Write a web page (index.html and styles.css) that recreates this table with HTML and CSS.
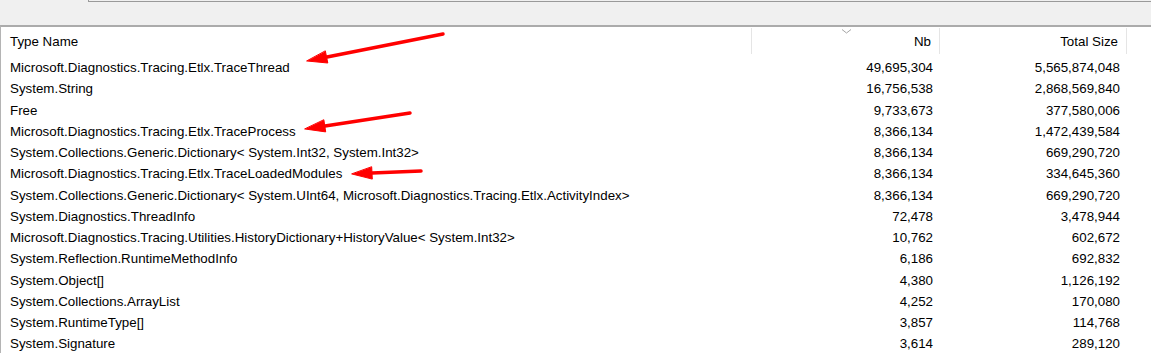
FILE: index.html
```html
<!DOCTYPE html>
<html>
<head>
<meta charset="utf-8">
<link rel="stylesheet" href="styles.css">
</head>
<body>
<div class="page">
  <div class="toolbar"><div class="textbox"></div></div>
  <div class="list">
    <div class="header">
      <div class="hcell first">Type Name</div>
      <div class="hcell num sorted">Nb<svg class="chev" width="11" height="5" viewBox="0 0 11 5"><polyline points="1,0.5 5.5,4 10,0.5" fill="none" stroke="#a6a6a6" stroke-width="1"/></svg></div>
      <div class="hcell num">Total Size</div>
      <div class="hcell rest"></div>
    </div>
    <div class="rows">
      <div class="row"><div class="cell first">Microsoft.Diagnostics.Tracing.Etlx.TraceThread</div><div class="cell num">49,695,304</div><div class="cell num">5,565,874,048</div><div class="cell"></div></div>
      <div class="row"><div class="cell first">System.String</div><div class="cell num">16,756,538</div><div class="cell num">2,868,569,840</div><div class="cell"></div></div>
      <div class="row"><div class="cell first">Free</div><div class="cell num">9,733,673</div><div class="cell num">377,580,006</div><div class="cell"></div></div>
      <div class="row"><div class="cell first">Microsoft.Diagnostics.Tracing.Etlx.TraceProcess</div><div class="cell num">8,366,134</div><div class="cell num">1,472,439,584</div><div class="cell"></div></div>
      <div class="row"><div class="cell first">System.Collections.Generic.Dictionary&lt; System.Int32, System.Int32&gt;</div><div class="cell num">8,366,134</div><div class="cell num">669,290,720</div><div class="cell"></div></div>
      <div class="row"><div class="cell first">Microsoft.Diagnostics.Tracing.Etlx.TraceLoadedModules</div><div class="cell num">8,366,134</div><div class="cell num">334,645,360</div><div class="cell"></div></div>
      <div class="row"><div class="cell first">System.Collections.Generic.Dictionary&lt; System.UInt64, Microsoft.Diagnostics.Tracing.Etlx.ActivityIndex&gt;</div><div class="cell num">8,366,134</div><div class="cell num">669,290,720</div><div class="cell"></div></div>
      <div class="row"><div class="cell first">System.Diagnostics.ThreadInfo</div><div class="cell num">72,478</div><div class="cell num">3,478,944</div><div class="cell"></div></div>
      <div class="row"><div class="cell first">Microsoft.Diagnostics.Tracing.Utilities.HistoryDictionary+HistoryValue&lt; System.Int32&gt;</div><div class="cell num">10,762</div><div class="cell num">602,672</div><div class="cell"></div></div>
      <div class="row"><div class="cell first">System.Reflection.RuntimeMethodInfo</div><div class="cell num">6,186</div><div class="cell num">692,832</div><div class="cell"></div></div>
      <div class="row"><div class="cell first">System.Object[]</div><div class="cell num">4,380</div><div class="cell num">1,126,192</div><div class="cell"></div></div>
      <div class="row"><div class="cell first">System.Collections.ArrayList</div><div class="cell num">4,252</div><div class="cell num">170,080</div><div class="cell"></div></div>
      <div class="row"><div class="cell first">System.RuntimeType[]</div><div class="cell num">3,857</div><div class="cell num">114,768</div><div class="cell"></div></div>
      <div class="row"><div class="cell first">System.Signature</div><div class="cell num">3,614</div><div class="cell num">289,120</div><div class="cell"></div></div>
    </div>
  </div>
  <svg class="annot" width="1151" height="353" viewBox="0 0 1151 353">
    <g stroke="#ff0000" stroke-width="3.5" stroke-linecap="round" fill="#ff0000">
      <line x1="443" y1="34" x2="327" y2="57"/>
      <polygon stroke-width="1" stroke-linejoin="round" points="307,61 327.8,63 325.4,51.2"/>
      <line x1="410" y1="113" x2="325" y2="126"/>
      <polygon stroke-width="1" stroke-linejoin="round" points="305,129 325.7,131.9 323.9,120.1"/>
      <line x1="421" y1="171" x2="372" y2="173"/>
      <polygon stroke-width="1" stroke-linejoin="round" points="352,174 372.3,179.1 371.7,167.1"/>
    </g>
  </svg>
</div>
</body>
</html>
```

FILE: styles.css
```css
html, body {
  margin: 0;
  padding: 0;
  width: 1151px;
  height: 353px;
  overflow: hidden;
  background: #ffffff;
}

.page {
  position: relative;
  width: 1151px;
  height: 353px;
  font-family: "Liberation Sans", Arial, sans-serif;
  font-size: 13.33px;
  color: #000000;
}

.toolbar {
  height: 25px;
  background: #f0f0f0;
}

.textbox {
  margin-left: 88px;
  height: 1px;
  border-left: 1px solid #9a9a9a;
  border-bottom: 1px solid #9a9a9a;
}

.list {
  border-top: 2px solid #ababab;
  border-left: 1px solid #b4b4b4;
  height: 326px;
  background: #ffffff;
}

.header {
  display: grid;
  grid-template-columns: 751px 188px 187px 1fr;
  padding-top: 1px;
}

.hcell {
  height: 25px;
  padding-top: 1px;
  line-height: 25px;
  border-right: 1px solid #e5e5e5;
  white-space: nowrap;
  position: relative;
}

.hcell.first {
  padding-left: 9px;
}

.hcell.num {
  text-align: right;
  padding-right: 8px;
}

.hcell.rest {
  border-right: none;
}

.chev {
  position: absolute;
  left: 89px;
  top: 1px;
}

.rows {
  padding-top: 3px;
}

.row {
  display: grid;
  grid-template-columns: 751px 188px 187px 1fr;
  height: 21.25px;
  line-height: 21.25px;
}

.cell {
  white-space: nowrap;
}

.cell.first {
  padding-left: 9px;
}

.cell.num {
  text-align: right;
  padding-right: 7px;
}

.annot {
  position: absolute;
  left: 0;
  top: 0;
  pointer-events: none;
}
```
